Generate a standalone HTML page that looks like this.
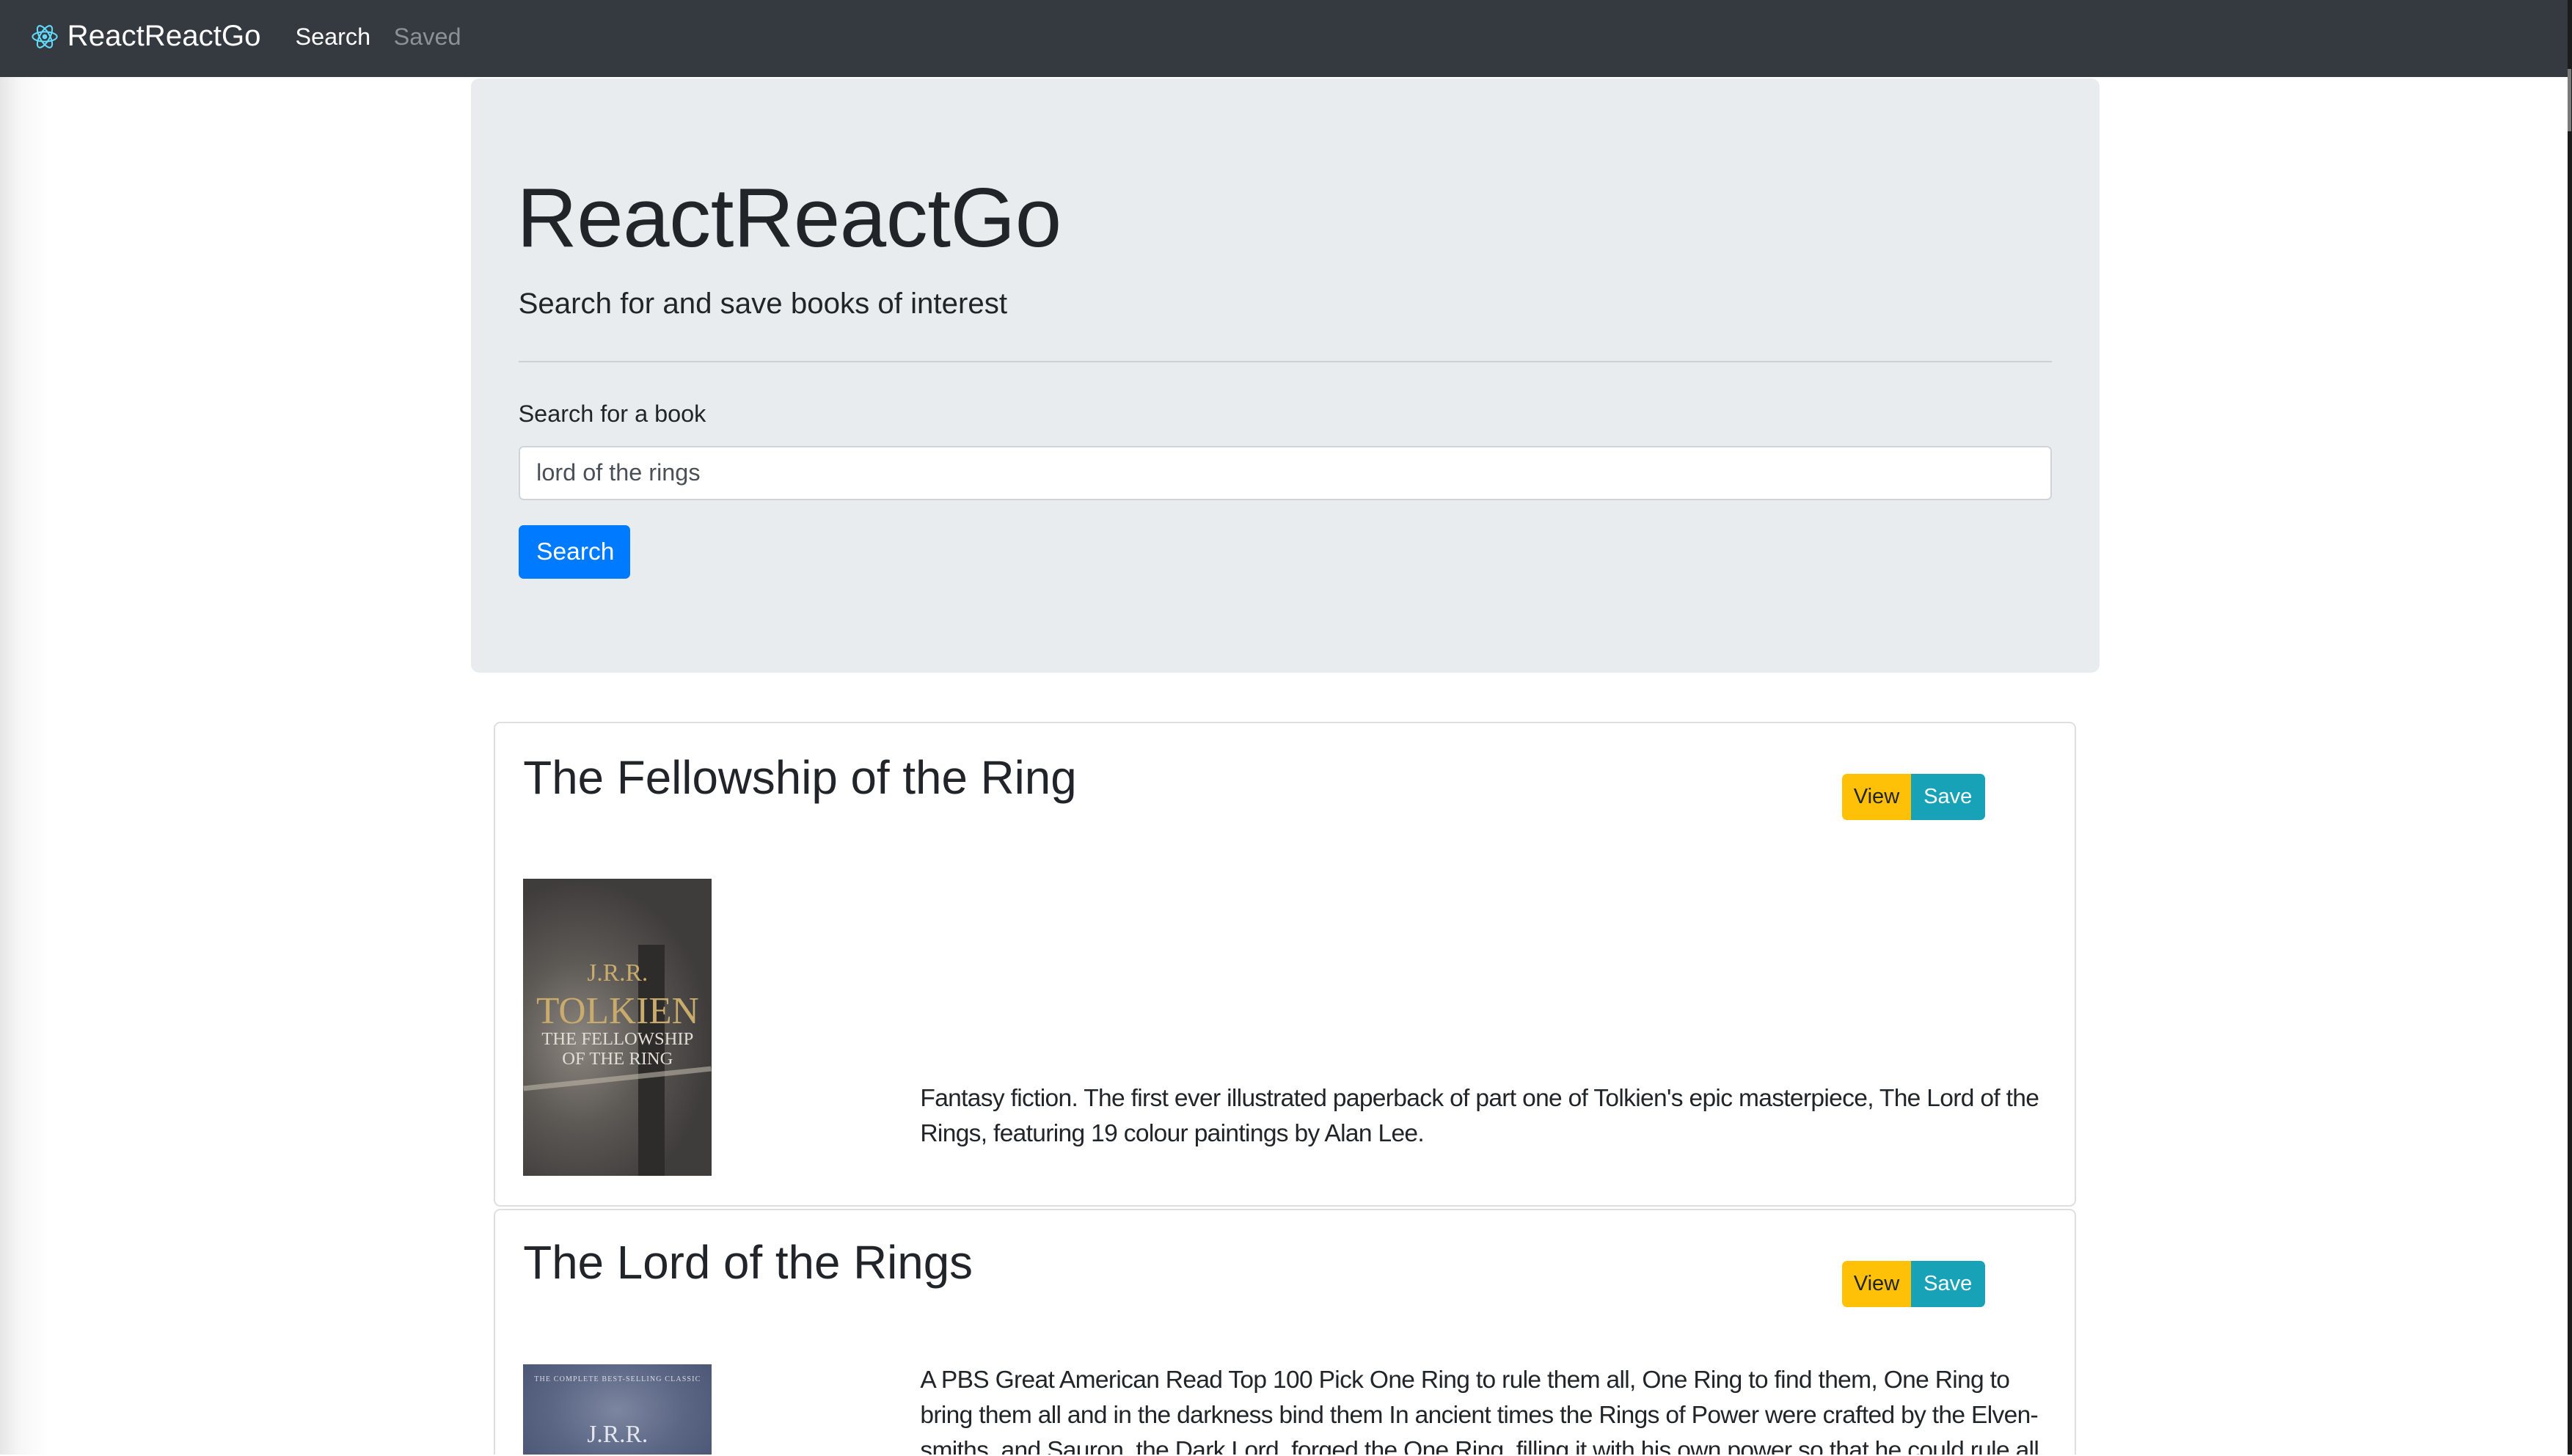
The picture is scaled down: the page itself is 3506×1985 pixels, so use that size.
<!DOCTYPE html>
<html><head><meta charset="utf-8"><style>
html,body{margin:0;padding:0;background:#fff;overflow:hidden;height:1985px}
#w{zoom:2.236;width:1568px;height:887px;position:relative;overflow:hidden;font-family:"Liberation Sans",Arial,sans-serif;color:#212529}
.a{position:absolute;white-space:nowrap;line-height:1}
#nav{position:absolute;left:0;top:0;width:1568px;height:47px;background:#343a40}
#shadow{position:absolute;left:0;top:47px;width:30px;height:841px;background:linear-gradient(90deg,#e6e6e6,#f7f7f7 40%,#fff)}
#sb{position:absolute;left:1565.5px;top:0;width:3px;height:888px;background:#1c1c1c}
#jumbo{position:absolute;left:287px;top:48px;width:993px;height:362px;background:#e9ecef;border-radius:5px}
.card{position:absolute;left:301px;width:963px;border:1px solid #dfdfdf;border-radius:4px;background:#fff}
.bt{position:absolute;height:28px;font-size:13px;line-height:28px;text-align:center}
.desc{position:absolute;left:561px;font-size:15px;letter-spacing:-0.3px;line-height:21.5px;white-space:nowrap;color:#212529}
</style></head><body><div id="w">
<div id="nav"></div>
<svg class="a" style="left:19px;top:14px" width="17" height="17" viewBox="-12 -12 24 24"><g fill="none" stroke="#61dafb" stroke-width="1.3"><ellipse rx="10.5" ry="4.2"/><ellipse rx="10.5" ry="4.2" transform="rotate(60)"/><ellipse rx="10.5" ry="4.2" transform="rotate(120)"/></g><circle r="2.1" fill="#61dafb"/></svg>
<div class="a" style="left:41px;top:13px;font-size:18px;color:#fff">ReactReactGo</div>
<div class="a" style="left:180px;top:15px;font-size:14.5px;color:#fff">Search</div>
<div class="a" style="left:240px;top:15px;font-size:14.5px;color:#8d9196">Saved</div>
<div id="shadow"></div>
<div id="sb"><div style="position:absolute;top:42px;left:0;width:2px;height:38px;background:#7a7a7a"></div></div>

<div id="jumbo"></div>
<div class="a" style="left:315px;top:108px;font-size:51px;letter-spacing:-0.2px">ReactReactGo</div>
<div class="a" style="left:316px;top:176px;font-size:18px">Search for and save books of interest</div>
<div class="a" style="left:316px;top:220px;width:935px;height:1px;background:#ccd0d4"></div>
<div class="a" style="left:316px;top:245px;font-size:14.5px">Search for a book</div>
<div class="a" style="left:316px;top:272px;width:933px;height:31px;background:#fff;border:1px solid #ced4da;border-radius:3px"></div>
<div class="a" style="left:327px;top:281px;font-size:14.5px;color:#495057">lord of the rings</div>
<div class="a" style="left:316px;top:320px;width:68px;height:33px;background:#007bff;border-radius:3px"></div>
<div class="a" style="left:327px;top:329px;font-size:15px;color:#fff">Search</div>

<div class="card" style="top:440px;height:294px"></div>
<div class="a" style="left:319px;top:460px;font-size:28.5px">The Fellowship of the Ring</div>
<div class="bt" style="left:1123px;top:472px;width:42px;background:#ffc107;border-radius:3px 0 0 3px;color:#212529">View</div>
<div class="bt" style="left:1165px;top:472px;width:45px;background:#17a2b8;border-radius:0 3px 3px 0;color:#fff">Save</div>
<div class="a" style="left:319px;top:536px;width:115px;height:181px;overflow:hidden;background:radial-gradient(ellipse at 30% 55%,#8c8680 0%,#5d5955 35%,#3f3d3c 70%),#444">
 <div style="position:absolute;left:70px;top:40px;width:16px;height:141px;background:#2e2c2b"></div>
 <div style="position:absolute;left:0;top:120px;width:115px;height:3px;background:#bdb6a8;opacity:.6;transform:rotate(-6deg)"></div>
 <div style="position:absolute;left:0;width:115px;top:50px;text-align:center;font-family:'Liberation Serif',serif;font-size:15px;color:#c9ab6c;line-height:1">J.R.R.</div>
 <div style="position:absolute;left:0;width:115px;top:69px;text-align:center;font-family:'Liberation Serif',serif;font-size:23px;color:#c9ab6c;line-height:1">TOLKIEN</div>
 <div style="position:absolute;left:0;width:115px;top:92px;text-align:center;font-family:'Liberation Serif',serif;font-size:11px;color:#e2ddd4;line-height:12px">THE FELLOWSHIP<br>OF THE RING</div>
</div>
<div class="desc" style="top:659px">Fantasy fiction. The first ever illustrated paperback of part one of Tolkien's epic masterpiece, The Lord of the<br>Rings, featuring 19 colour paintings by Alan Lee.</div>

<div class="card" style="top:737px;height:200px"></div>
<div class="a" style="left:319px;top:756px;font-size:28.5px">The Lord of the Rings</div>
<div class="bt" style="left:1123px;top:769px;width:42px;background:#ffc107;border-radius:3px 0 0 3px;color:#212529">View</div>
<div class="bt" style="left:1165px;top:769px;width:45px;background:#17a2b8;border-radius:0 3px 3px 0;color:#fff">Save</div>
<div class="a" style="left:319px;top:832px;width:115px;height:70px;overflow:hidden;background:radial-gradient(ellipse at 50% 40%,#7c86a0 0%,#5a6684 50%,#46526e 100%)">
 <div style="position:absolute;left:0;width:115px;top:7px;text-align:center;font-family:'Liberation Serif',serif;font-size:4.5px;color:#d8dbe4;letter-spacing:.5px">THE COMPLETE BEST-SELLING CLASSIC</div>
 <div style="position:absolute;left:0;width:115px;top:35px;text-align:center;font-family:'Liberation Serif',serif;font-size:15px;color:#e4e6ee;line-height:1">J.R.R.</div>
</div>
<div class="desc" style="top:831px">A PBS Great American Read Top 100 Pick One Ring to rule them all, One Ring to find them, One Ring to<br>bring them all and in the darkness bind them In ancient times the Rings of Power were crafted by the Elven-<br>smiths, and Sauron, the Dark Lord, forged the One Ring, filling it with his own power so that he could rule all</div>
</div></body></html>
